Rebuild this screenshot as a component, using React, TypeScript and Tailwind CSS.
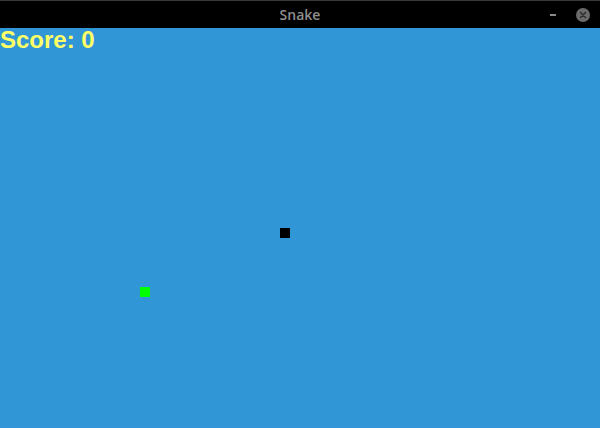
export default function App() {
  return (
    <div className="flex h-[428px] w-[600px] flex-col overflow-hidden bg-black">
      {/* TITLE BAR */}
      <div className="relative flex h-[28px] items-center justify-center border-t border-[#3a3a3a] bg-black">
        <span className="font-['Open_Sans',sans-serif] text-[14px] font-semibold text-[#8f8f8f]">Snake</span>
        <div className="absolute right-[10px] top-0 flex h-full items-center gap-[20px]">
          <div className="h-[2px] w-[6px] bg-[#8a8a8a]" />
          <div className="flex h-[14px] w-[14px] items-center justify-center rounded-full bg-[#6b6b6b]">
            <svg width="8" height="8" viewBox="0 0 8 8">
              <path d="M1.5 1.5 L6.5 6.5 M6.5 1.5 L1.5 6.5" stroke="#2e2e2e" strokeWidth="1.6" strokeLinecap="round" />
            </svg>
          </div>
        </div>
      </div>

      {/* GAME AREA */}
      <div className="relative flex-1 bg-[#3196d5]">
        <div className="font-['Liberation_Sans',sans-serif] text-[24px] font-bold leading-[24px] text-[#ffff66]">
          Score: 0
        </div>
        <div className="absolute left-[280px] top-[200px] h-[10px] w-[10px] bg-black" />
        <div className="absolute left-[140px] top-[259px] h-[10px] w-[10px] bg-[#00ff00]" />
      </div>
    </div>
  );
}
